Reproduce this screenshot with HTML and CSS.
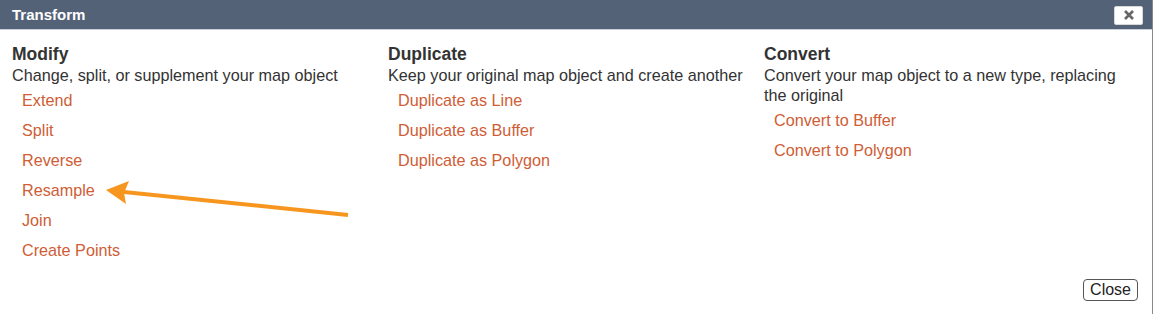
FILE: index.html
```html
<!DOCTYPE html>
<html>
<head>
<meta charset="utf-8">
<link rel="stylesheet" href="styles.css">
</head>
<body>
<div class="dialog">
  <div class="titlebar">
    <span class="title">Transform</span>
    <button class="x-btn" aria-label="close"><svg width="12" height="12" viewBox="0 0 12 12"><path d="M2 2L10 10M10 2L2 10" stroke="#666" stroke-width="2.6" stroke-linecap="butt"/></svg></button>
  </div>
  <div class="content">
    <div class="col">
      <div class="heading">Modify</div>
      <div class="desc">Change, split, or supplement your map object</div>
      <ul class="links">
        <li><a>Extend</a></li>
        <li><a>Split</a></li>
        <li><a>Reverse</a></li>
        <li><a>Resample</a></li>
        <li><a>Join</a></li>
        <li><a>Create Points</a></li>
      </ul>
    </div>
    <div class="col">
      <div class="heading">Duplicate</div>
      <div class="desc">Keep your original map object and create another</div>
      <ul class="links">
        <li><a>Duplicate as Line</a></li>
        <li><a>Duplicate as Buffer</a></li>
        <li><a>Duplicate as Polygon</a></li>
      </ul>
    </div>
    <div class="col">
      <div class="heading">Convert</div>
      <div class="desc">Convert your map object to a new type, replacing the original</div>
      <ul class="links">
        <li><a>Convert to Buffer</a></li>
        <li><a>Convert to Polygon</a></li>
      </ul>
    </div>
  </div>
  <div class="footer">
    <button class="close-btn">Close</button>
  </div>
  <svg class="arrow" width="260" height="40" viewBox="0 0 260 40">
    <line x1="244" y1="31" x2="20" y2="8" stroke="#f7961f" stroke-width="4"/>
    <polygon points="0,6 23,-3 18,9 20,20" fill="#f7961f" transform="translate(2,0)"/>
  </svg>
</div>
</body>
</html>
```
FILE: styles.css
```css
* { box-sizing: border-box; }
html, body { margin: 0; padding: 0; background: #fff; }
body { font-family: "Liberation Sans", Arial, sans-serif; color: #333; }
.dialog {
  position: relative;
  width: 1153px;
  height: 314px;
  border-right: 1px solid #8a8a8a;
  display: flex;
  flex-direction: column;
}
.titlebar {
  height: 30px;
  background: #546278;
  border-bottom: 1px solid #c9d0da;
  display: flex;
  align-items: center;
  justify-content: space-between;
  padding: 0 9px 0 12px;
}
.title { color: #fff; font-weight: bold; font-size: 15px; }
.x-btn {
  width: 29px;
  height: 19px;
  margin-top: 1px;
  background: #fff;
  border: 1px solid #d8d8d8;
  border-radius: 2px;
  padding: 0;
  display: flex;
  align-items: center;
  justify-content: center;
}
.content {
  display: flex;
  padding: 14px 0 0 12px;
  flex: 1;
}
.col { width: 376px; padding-right: 12px; }
.heading { font-size: 17.5px; font-weight: bold; line-height: 21px; }
.desc { font-size: 16.2px; line-height: 20px; }
.links { list-style: none; margin: 0; padding: 0 0 0 10px; }
.links li { font-size: 16.2px; line-height: 30px; }
.links a { color: #cf5d36; }
.footer {
  display: flex;
  justify-content: flex-end;
  padding: 0 14px 13px 0;
}
.close-btn {
  font-family: "Liberation Sans", Arial, sans-serif;
  font-size: 16px;
  color: #222;
  background: #fff;
  border: 1px solid #555;
  border-radius: 4px;
  height: 22px;
  padding: 0 6px;
  line-height: 18px;
}
.arrow {
  position: absolute;
  left: 104px;
  top: 184px;
  overflow: visible;
}
```
